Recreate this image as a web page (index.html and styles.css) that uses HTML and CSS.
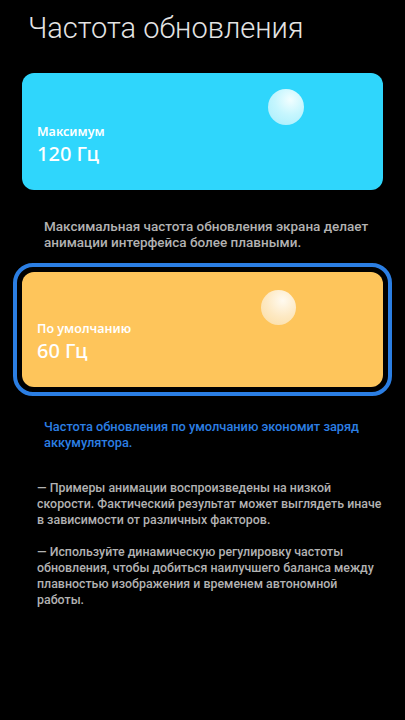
FILE: index.html
```html
<!DOCTYPE html>
<html lang="ru">
<head>
<meta charset="utf-8">
<title>Частота обновления</title>
<link rel="stylesheet" href="styles.css">
</head>
<body>
<main class="screen">
  <h1 class="title">Частота обновления</h1>

  <section class="option">
    <div class="card card-max">
      <span class="ball ball-cyan"></span>
      <div class="card-label">Максимум</div>
      <div class="card-value">120 Гц</div>
    </div>
  </section>
  <p class="desc">Максимальная частота обновления экрана делает анимации интерфейса более плавными.</p>

  <section class="option option-selected">
    <div class="card card-default">
      <span class="ball ball-cream"></span>
      <div class="card-label">По умолчанию</div>
      <div class="card-value">60 Гц</div>
    </div>
  </section>
  <p class="desc desc-active">Частота обновления по умолчанию экономит заряд<br>аккумулятора.</p>

  <div class="notes">
    <p>— Примеры анимации воспроизведены на низкой<br>скорости. Фактический результат может выглядеть иначе<br>в зависимости от различных факторов.</p>
    <p>— Используйте динамическую регулировку частоты<br>обновления, чтобы добиться наилучшего баланса между<br>плавностью изображения и временем автономной<br>работы.</p>
  </div>
</main>
</body>
</html>
```

FILE: styles.css
```css
html, body {
  margin: 0;
  padding: 0;
  background: #000;
}

.screen {
  width: 405px;
  height: 720px;
  box-sizing: border-box;
  padding: 8px 22px 0 22px;
  font-family: "Noto Sans", "DejaVu Sans", sans-serif;
  color: #fff;
  overflow: hidden;
}

.title {
  margin: 0 0 0 6px;
  font-family: Roboto, "Noto Sans", sans-serif;
  font-weight: 300;
  font-size: 29px;
  line-height: 40px;
  color: #e4e4e4;
}

.option {
  margin-top: 25px;
  border-radius: 12px;
}

.option-selected {
  margin: 13px -9px 0;
  padding: 5px;
  border: 4px solid #2b7ee3;
  border-radius: 20px;
}

.card {
  position: relative;
  height: 117px;
  border-radius: 12px;
  box-sizing: border-box;
  padding: 50px 0 0 15px;
}

.card-max {
  background: #2fd6fc;
}

.card-default {
  height: 115px;
  background: #fec55b;
  padding-top: 48px;
}

.ball {
  position: absolute;
  top: 16px;
  left: 246px;
  width: 36px;
  height: 36px;
  border-radius: 50%;
}

.ball-cyan {
  background: radial-gradient(circle at 62% 30%, #f2feff 0%, #c6f6fe 45%, #a4edfc 100%);
}

.ball-cream {
  top: 18px;
  left: 239px;
  width: 35px;
  height: 35px;
  background: radial-gradient(circle at 62% 30%, #fffaf0 0%, #fde9c3 50%, #fbdca0 100%);
}

.card-label {
  font-size: 12.5px;
  font-weight: 600;
  line-height: 18px;
}

.card-value {
  margin-top: 1px;
  font-size: 20px;
  font-weight: 500;
  line-height: 24px;
}

.desc,
.notes p {
  font-family: Roboto, "Noto Sans", sans-serif;
  font-size: 13.5px;
  line-height: 16px;
  font-weight: 500;
  color: #b2b2b2;
}

.desc {
  margin: 28px 0 0 22px;
}

.desc-active {
  margin-top: 23px;
  font-size: 12.8px;
  color: #2c7fe4;
}

.notes {
  margin: 29px -10px 0 15px;
}

.notes p {
  margin: 0 0 16px;
  font-size: 12.4px;
}
```
